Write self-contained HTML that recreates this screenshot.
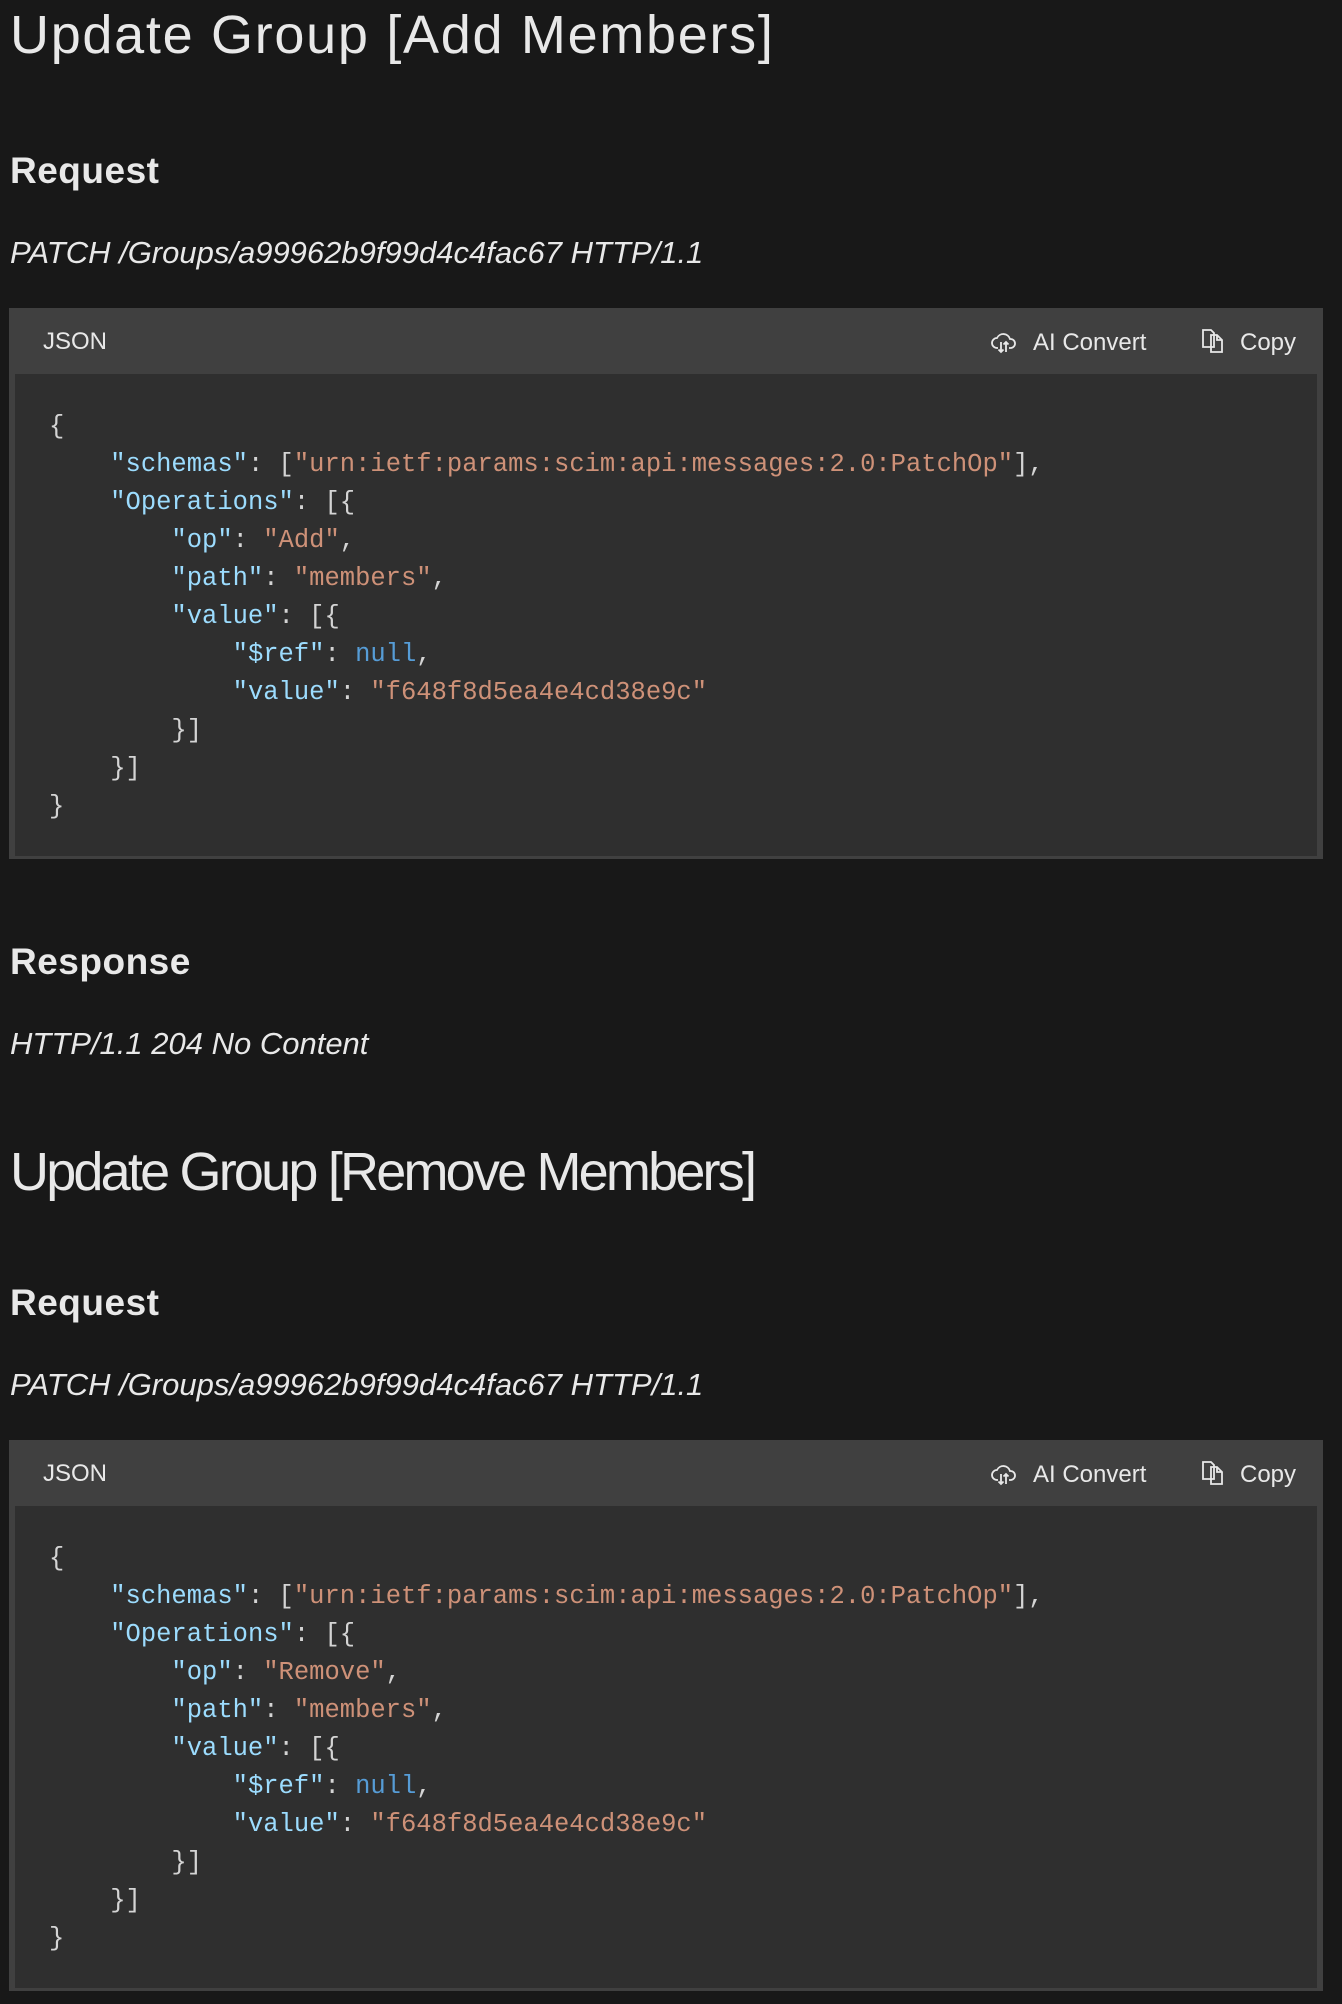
<!DOCTYPE html>
<html><head><meta charset="utf-8"><style>
*{margin:0;padding:0;box-sizing:border-box}
body{width:1342px;height:2004px;background:#181818;color:#e8e8e8;font-family:"Liberation Sans",sans-serif;position:relative;overflow:hidden}
.a{position:absolute;white-space:pre;line-height:1}
.h1{font-size:54px;left:10px}
.h2{font-size:37px;font-weight:bold;left:10px;letter-spacing:0.5px}
.it{font-size:31px;font-style:italic;left:10px}
.blk{position:absolute;left:9px;width:1314px;height:551px;background:#404040;border:3px solid #404040}
.hd{height:63px;position:relative;font-size:24px}
.code{position:absolute;left:3px;right:3px;top:63px;bottom:0;background:#2f2f2f;font-family:"Liberation Mono",monospace;font-size:25.5px;padding:34px 0 0 34px;line-height:38px;white-space:pre;color:#d4d4d4}
.k{color:#9cdcfe}.s{color:#ce9178}.n{color:#569cd6}
</style></head><body>
<div class="a h1" style="top:8px;letter-spacing:1.7px">Update Group [Add Members]</div>
<div class="a h2" style="top:152px">Request</div>
<div class="a it" style="top:237px">PATCH /Groups/a99962b9f99d4c4fac67 HTTP/1.1</div>

<div class="blk" style="top:308px">
<div class="hd"><span class="a" style="left:31px;top:19px">JSON</span>
<svg class="a" style="left:979px;top:20px" width="26" height="24" viewBox="0 0 26 24" fill="none" stroke="#e8e8e8" stroke-width="1.8"><path d="M7 17H6a5 5 0 0 1 0-10 7 7 0 0 1 13 1 4.5 4.5 0 0 1 1 9h-2"/><path d="M10 11v10M7.5 18.5 10 21l2.5-2.5M15 21V11M12.5 13.5 15 11l2.5 2.5"/></svg>
<span class="a" style="left:1021px;top:20px">AI Convert</span>
<svg class="a" style="left:1188px;top:16px" width="26" height="28" viewBox="0 0 26 28" fill="none" stroke="#e8e8e8" stroke-width="1.8"><path d="M3 3h8l3 3v14H3z"/><path d="M11 8h6l5 5v12H11z"/><path d="M17 8v5h5"/></svg>
<span class="a" style="left:1228px;top:20px">Copy</span></div>
<div class="code">{
    <span class="k">"schemas"</span>: [<span class="s">"urn:ietf:params:scim:api:messages:2.0:PatchOp"</span>],
    <span class="k">"Operations"</span>: [{
        <span class="k">"op"</span>: <span class="s">"Add"</span>,
        <span class="k">"path"</span>: <span class="s">"members"</span>,
        <span class="k">"value"</span>: [{
            <span class="k">"$ref"</span>: <span class="n">null</span>,
            <span class="k">"value"</span>: <span class="s">"f648f8d5ea4e4cd38e9c"</span>
        }]
    }]
}</div></div>

<div class="a h2" style="top:943px">Response</div>
<div class="a it" style="top:1028px">HTTP/1.1 204 No Content</div>

<div class="a h1" style="top:1145px;letter-spacing:-2.8px">Update Group [Remove Members]</div>
<div class="a h2" style="top:1284px">Request</div>
<div class="a it" style="top:1369px">PATCH /Groups/a99962b9f99d4c4fac67 HTTP/1.1</div>

<div class="blk" style="top:1440px">
<div class="hd"><span class="a" style="left:31px;top:19px">JSON</span>
<svg class="a" style="left:979px;top:20px" width="26" height="24" viewBox="0 0 26 24" fill="none" stroke="#e8e8e8" stroke-width="1.8"><path d="M7 17H6a5 5 0 0 1 0-10 7 7 0 0 1 13 1 4.5 4.5 0 0 1 1 9h-2"/><path d="M10 11v10M7.5 18.5 10 21l2.5-2.5M15 21V11M12.5 13.5 15 11l2.5 2.5"/></svg>
<span class="a" style="left:1021px;top:20px">AI Convert</span>
<svg class="a" style="left:1188px;top:16px" width="26" height="28" viewBox="0 0 26 28" fill="none" stroke="#e8e8e8" stroke-width="1.8"><path d="M3 3h8l3 3v14H3z"/><path d="M11 8h6l5 5v12H11z"/><path d="M17 8v5h5"/></svg>
<span class="a" style="left:1228px;top:20px">Copy</span></div>
<div class="code">{
    <span class="k">"schemas"</span>: [<span class="s">"urn:ietf:params:scim:api:messages:2.0:PatchOp"</span>],
    <span class="k">"Operations"</span>: [{
        <span class="k">"op"</span>: <span class="s">"Remove"</span>,
        <span class="k">"path"</span>: <span class="s">"members"</span>,
        <span class="k">"value"</span>: [{
            <span class="k">"$ref"</span>: <span class="n">null</span>,
            <span class="k">"value"</span>: <span class="s">"f648f8d5ea4e4cd38e9c"</span>
        }]
    }]
}</div></div>
</body></html>
